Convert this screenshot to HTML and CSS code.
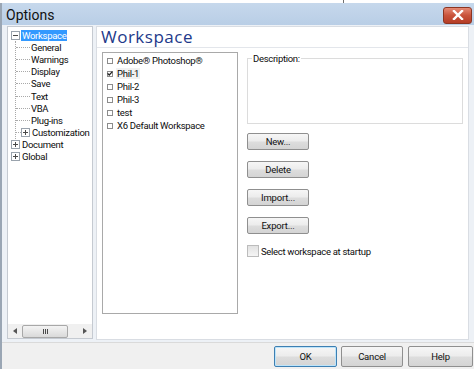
FILE: index.html
```html
<!DOCTYPE html>
<html>
<head>
<meta charset="utf-8">
<link rel="stylesheet" href="styles.css">
</head>
<body>
<div class="strip"><div class="strip-gap"></div><div class="strip-line"></div></div>
<div class="window">
  <div class="titlebar">
    <span class="title">Options</span>
    <div class="close"><svg width="12" height="10" viewBox="0 0 12 10"><path d="M2 1 L10 9 M10 1 L2 9" stroke="#fff" stroke-width="2.4" stroke-linecap="square"/></svg></div>
  </div>
  <div class="main">
    <div class="tree">
      <div class="tree-body">
        <div class="node"><span class="pm minus"></span><span class="label sel">Workspace</span></div>
        <div class="group">
          <div class="node"><span class="dash"></span><span class="label">General</span></div>
          <div class="node"><span class="dash"></span><span class="label">Warnings</span></div>
          <div class="node"><span class="dash"></span><span class="label">Display</span></div>
          <div class="node"><span class="dash"></span><span class="label">Save</span></div>
          <div class="node"><span class="dash"></span><span class="label">Text</span></div>
          <div class="node"><span class="dash"></span><span class="label">VBA</span></div>
          <div class="node"><span class="dash"></span><span class="label">Plug-ins</span></div>
          <div class="node"><span class="dash short"></span><span class="pm plus"></span><span class="label">Customization</span></div>
        </div>
        <div class="node"><span class="pm plus"></span><span class="label">Document</span></div>
        <div class="node"><span class="pm plus"></span><span class="label">Global</span></div>
      </div>
      <div class="hscroll">
        <span class="arr"><svg width="4" height="6" viewBox="0 0 4 6"><path d="M4 0 L0 3 L4 6Z" fill="#555"/></svg></span>
        <span class="thumb"><span class="grip"></span><span class="grip"></span><span class="grip"></span></span>
        <span class="track"></span>
        <span class="arr"><svg width="4" height="6" viewBox="0 0 4 6"><path d="M0 0 L4 3 L0 6Z" fill="#555"/></svg></span>
      </div>
    </div>
    <div class="panel">
      <div class="panel-head">Workspace</div>
      <div class="panel-body">
        <div class="list">
          <div class="item"><span class="cb"></span>Adobe® Photoshop®</div>
          <div class="item"><span class="cb"><svg width="6" height="5" viewBox="0 0 6 5"><path d="M0.6 2.4 L2.2 4 L5.4 0.6" stroke="#222" stroke-width="1.3" fill="none"/></svg></span><span class="cur">Phil-1</span></div>
          <div class="item"><span class="cb"></span>Phil-2</div>
          <div class="item"><span class="cb"></span>Phil-3</div>
          <div class="item"><span class="cb"></span>test</div>
          <div class="item"><span class="cb"></span>X6 Default Workspace</div>
        </div>
        <div class="side">
          <div class="desc"><span class="desc-label">Description:</span></div>
          <div class="btns">
            <button class="btn">New...</button>
            <button class="btn">Delete</button>
            <button class="btn">Import...</button>
            <button class="btn">Export...</button>
          </div>
          <div class="check"><span class="bigcb"></span>Select workspace at startup</div>
        </div>
      </div>
    </div>
  </div>
  <div class="footer">
    <button class="dbtn ok">OK</button>
    <button class="dbtn cancel">Cancel</button>
    <button class="dbtn help">Help</button>
  </div>
</div>
</body>
</html>
```
FILE: styles.css
```css
* { box-sizing: border-box; }
html, body { margin: 0; padding: 0; }
body {
  width: 474px; height: 369px; overflow: hidden; background: #fff;
  font-family: Roboto, "Noto Sans", sans-serif; font-size: 9.5px; letter-spacing: -0.3px; color: #0c0c0c;
}
.strip { height: 3px; display: flex; background: #fff; }
.strip-gap { width: 343px; }
.strip-line { width: 1px; background: #6f6f6f; }
.window {
  height: 366px; border-left: 2px solid #9aa6b4; background: #e8eef5;
  display: flex; flex-direction: column;
}
.titlebar {
  height: 22px; flex: none; display: flex; align-items: center; justify-content: space-between;
  background: linear-gradient(#c6d8ec, #b9cee6); padding: 0 0 0 4px;
}
.title { font-family: Roboto, "Noto Sans", sans-serif; font-size: 14px; line-height: 16px; letter-spacing: 0; color: #111; margin-top: 2px; }
.close {
  width: 29px; height: 17px; margin-top: 2px; margin-right: 2px; border-radius: 3px;
  background: linear-gradient(#e58a75, #c9533b 50%, #b53d26);
  border: 1px solid #8c3522; display: flex; align-items: center; justify-content: center;
}
.main {
  height: 317px; flex: none; display: flex; gap: 3px; padding: 1px 5px 0 5px; background: #edf1f6;
}
.tree {
  width: 86px; height: 313px; background: #fff; border: 1px solid #c5cad1;
  display: flex; flex-direction: column;
}
.tree-body { flex: 1; padding: 2px 0 0 3px; }
.node { height: 12.2px; display: flex; align-items: center; line-height: 11px; white-space: nowrap; }
.group { margin-left: 4px; border-left: 1px dotted #a9a9a9; }
.pm { width: 9px; height: 9px; border: 1px solid #9aa3ad; margin-right: 1px; position: relative; background: #fff; flex: none; }
.pm::before { content: ""; position: absolute; left: 1px; top: 3px; width: 5px; height: 1px; background: #4a4a4a; }
.pm.plus::after { content: ""; position: absolute; left: 3px; top: 1px; width: 1px; height: 5px; background: #4a4a4a; }
.dash { width: 14px; height: 0; border-top: 1px dotted #a9a9a9; flex: none; }
.dash.short { width: 5px; }
.label { padding: 0 1px; line-height: 11px; }
.label.sel { background: #3399ff; color: #fff; }
.hscroll { height: 14px; flex: none; display: flex; align-items: center; background: #f0f0f0; }
.arr { width: 14px; height: 14px; display: flex; align-items: center; justify-content: center; }
.thumb {
  width: 46px; height: 13px; border: 1px solid #a8a8a8; border-radius: 2px;
  background: linear-gradient(#f4f4f4, #d9d9d9); display: flex; align-items: center; justify-content: center; gap: 1px;
}
.grip { width: 1px; height: 5px; background: #4a4a4a; }
.track { flex: 1; }
.panel {
  flex: 1; height: 314px; background: #fff; border: 1px solid #d9dde3; display: flex; flex-direction: column;
}
.panel-head {
  height: 21px; flex: none; padding: 0 0 0 4px; font-family: "Open Sans", "Noto Sans", sans-serif;
  font-size: 17px; line-height: 20px; letter-spacing: 0.5px; color: #22398a; border-bottom: 1px solid #e3e6eb;
}
.panel-body { flex: 1; display: flex; padding: 4px 5px 0 5px; gap: 9px; }
.list { width: 136px; height: 262px; flex: none; border: 1px solid #a9a9a9; padding: 1px 0 0 4px; }
.item { height: 13px; display: flex; align-items: center; white-space: nowrap; line-height: 11px; }
.cb { width: 6px; height: 6px; border: 1px solid #8c8c8c; margin-right: 4px; flex: none; display: flex; align-items: center; justify-content: center; background: #fff; overflow: visible; }
.cb svg { flex: none; }
.cur { background: #f1f1f1; padding: 0 1px; margin-left: -1px; }
.side { flex: 1; display: flex; flex-direction: column; padding-top: 6px; }
.desc { height: 66px; flex: none; border: 1px solid #dcdcdc; position: relative; }
.desc-label { position: absolute; left: 4px; top: -6px; background: #fff; padding: 0 1px; line-height: 11px; }
.btns { display: flex; flex-direction: column; gap: 11px; margin-top: 9px; }
.btn, .dbtn {
  font-family: Roboto, "Noto Sans", sans-serif; font-size: 9.5px; letter-spacing: -0.2px; color: #111;
  border: 1px solid #8f8f8f; border-radius: 2px; padding: 0;
  background: linear-gradient(#f6f6f6 0%, #ececec 48%, #dddddd 52%, #d4d4d4 100%);
}
.btn { width: 62px; height: 17px; }
.check { display: flex; align-items: center; margin-top: 11px; }
.bigcb { width: 12px; height: 12px; flex: none; border: 1px solid #bcbcbc; background: linear-gradient(#e2e2e2, #f5f5f5); margin-right: 2px; }
.footer {
  flex: 1; display: flex; justify-content: flex-end; align-items: center; gap: 4px;
  padding: 0 1px 0 0; border-top: 1px solid #dadada; background: #f0f0f0;
}
.dbtn { width: 62px; height: 21px; }
.dbtn.ok { width: 63px; border-color: #3d7fb2; box-shadow: inset 0 0 0 1px #bde4fa; }
.dbtn.help { width: 65px; margin-left: 1px; }
```
